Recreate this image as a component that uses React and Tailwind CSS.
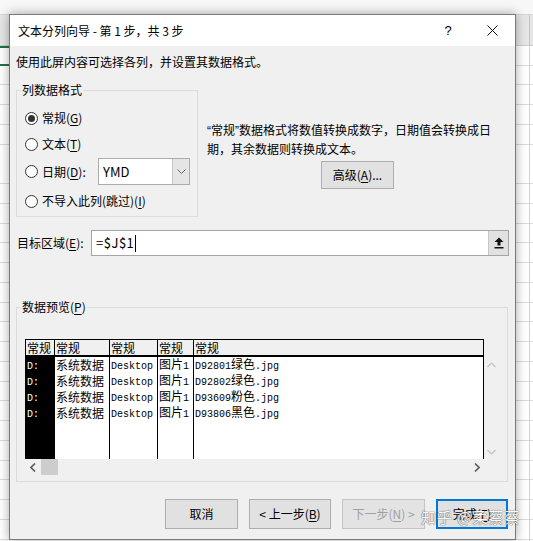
import React from "react";

function U({ children }) {
  return <span className="underline underline-offset-[2px] decoration-[1px]">{children}</span>;
}

function Radio({ checked }) {
  return (
    <span className="w-[13px] h-[13px] rounded-full border border-[#333333] bg-white flex items-center justify-center shrink-0">
      {checked && <span className="w-[7px] h-[7px] rounded-full bg-[#333333]" />}
    </span>
  );
}

function Mixed({ text }) {
  const parts = text.split(/([\u4e00-\u9fff]+)/).filter(Boolean);
  return (
    <span className="leading-[16px] whitespace-nowrap">
      {parts.map((p, i) =>
        /[\u4e00-\u9fff]/.test(p) ? (
          <span key={i} className="text-[12px] font-['Noto_Sans_CJK_SC',sans-serif]">
            {p}
          </span>
        ) : (
          <span key={i} className="text-[10px] font-['Liberation_Mono',monospace]">
            {p}
          </span>
        )
      )}
    </span>
  );
}

const cols = [
  { w: "w-[29px] border-r border-black", black: true, cells: ["D:", "D:", "D:", "D:"] },
  { w: "w-[55px] border-r border-black", cells: ["系统数据", "系统数据", "系统数据", "系统数据"] },
  { w: "w-[48px] border-r border-black", cells: ["Desktop", "Desktop", "Desktop", "Desktop"] },
  { w: "w-[36px] border-r border-black", cells: ["图片1", "图片1", "图片1", "图片1"] },
  { w: "flex-1", cells: ["D92801绿色.jpg", "D92802绿色.jpg", "D93609粉色.jpg", "D93806黑色.jpg"] },
];

function Btn({ children, className = "" }) {
  return (
    <div className={"h-[30px] flex items-center justify-center border " + className}>
      <span className="leading-[16px]">{children}</span>
    </div>
  );
}

function Q({ children }) {
  return <span className="font-['Liberation_Sans',sans-serif]">{children}</span>;
}

export default function App() {
  return (
    <div className="relative w-[533px] h-[541px] overflow-hidden bg-white font-['Noto_Sans_CJK_SC',sans-serif] text-[12px] text-black">
      {/* spreadsheet behind the dialog */}
      <div className="flex flex-col h-full">
        <div className="h-[15px] bg-[#f7f7f7] border-b border-[#d6d6d6]" />
        <div className="h-[31px] bg-[#e6e6e6] border-b border-[#cdcdcd] flex justify-end">
          <div className="w-[4px] border-l border-[#c4c4c4]" />
        </div>
        <div className="flex-1 bg-[linear-gradient(to_right,transparent_529px,#d4d4d4_529px,#d4d4d4_530px,transparent_530px),repeating-linear-gradient(to_bottom,transparent_0px,transparent_18.75px,#dadada_18.75px,#dadada_19.75px)]">
          <div className="w-[9px] h-[20px] border-y-2 border-[#217346]" />
        </div>
      </div>

      {/* dialog window */}
      <div className="absolute left-[9px] top-[14px] w-[507px] h-[526px] border border-[#7a7a7a] bg-[#f0f0f0] shadow-[0_0_10px_rgba(0,0,0,0.35)] flex flex-col">
        {/* title bar */}
        <div className="h-[31px] bg-white flex items-center pl-[8px] pr-[8px] shrink-0">
          <span className="leading-[16px]">文本分列向导 - 第 1 步，共 3 步</span>
          <div className="ml-auto flex items-center gap-[14px]">
            <span className="w-[30px] text-center text-[13px] leading-[16px] font-['Liberation_Sans',sans-serif]">?</span>
            <span className="w-[30px] flex justify-center">
              <svg width="11" height="11" viewBox="0 0 11 11">
                <path d="M0.5 0.5 L10.5 10.5 M10.5 0.5 L0.5 10.5" stroke="#111" strokeWidth="1" fill="none" />
              </svg>
            </span>
          </div>
        </div>

        {/* body */}
        <div className="flex-1 px-[6px] flex flex-col">
          <p className="mt-[8px] leading-[16px]">使用此屏内容可选择各列，并设置其数据格式。</p>

          <div className="mt-[12px] flex items-start">
            <fieldset className="w-[182px] border border-[#dcdcdc] pb-[5px]">
              <legend className="ml-[4px] px-[1px] leading-[16px]">列数据格式</legend>
              <div className="pl-[8px]">
                <div className="mt-[10px] h-[20px] flex items-center gap-[4px]">
                  <Radio checked />
                  <span className="leading-[16px]">
                    常规(<U>G</U>)
                  </span>
                </div>
                <div className="mt-[6px] h-[20px] flex items-center gap-[4px]">
                  <Radio />
                  <span className="leading-[16px]">
                    文本(<U>T</U>)
                  </span>
                </div>
                <div className="mt-[4px] h-[27px] flex items-center">
                  <Radio />
                  <span className="ml-[4px] w-[56px] leading-[16px]">
                    日期(<U>D</U>):
                  </span>
                  <div className="w-[92px] h-[27px] border border-[#acacac] bg-white flex">
                    <div className="flex-1 flex items-center pl-[4px] text-[13px] leading-[16px]">YMD</div>
                    <div className="w-[17px] bg-[#e5e5e5] border-l border-[#c8c8c8] flex items-center justify-center">
                      <svg width="9" height="6" viewBox="0 0 9 6">
                        <path d="M0.5 0.5 L4.5 4.5 L8.5 0.5" stroke="#666" strokeWidth="1" fill="none" />
                      </svg>
                    </div>
                  </div>
                </div>
                <div className="mt-[6px] h-[20px] flex items-center gap-[4px]">
                  <Radio />
                  <span className="leading-[16px]">
                    不导入此列(跳过)(<U>I</U>)
                  </span>
                </div>
              </div>
            </fieldset>

            <div className="ml-[9px] pt-[39px]">
              <p className="leading-[18px] whitespace-nowrap">
                <Q>“</Q>常规<Q>”</Q>数据格式将数值转换成数字，日期值会转换成日
                <br />
                期，其余数据则转换成文本。
              </p>
              <Btn className="ml-[114px] mt-[3px] w-[73px] !h-[28px] bg-[#e1e1e1] border-[#adadad]">
                高级(<U>A</U>)...
              </Btn>
            </div>
          </div>

          {/* target range */}
          <div className="mt-[13px] h-[26px] flex items-center">
            <span className="ml-[1px] w-[74px] leading-[16px]">
              目标区域(<U>E</U>):
            </span>
            <div className="w-[418px] h-[26px] border border-[#a5a5a5] bg-white flex">
              <div className="flex-1 flex items-center pl-[4px] text-[13px] leading-[16px]">
                <span className="tracking-[0.5px]">=$J$1</span>
                <span className="ml-[1px] w-px h-[17px] bg-black" />
              </div>
              <div className="w-[20px] bg-[#e1e1e1] border-l border-[#c6c6c6] flex items-center justify-center">
                <svg width="10" height="12" viewBox="0 0 10 12">
                  <path d="M5 0.5 L9.5 5 L6.5 5 L6.5 8.5 L3.5 8.5 L3.5 5 L0.5 5 Z" fill="#111" />
                  <rect x="0.5" y="10" width="9" height="1.5" fill="#111" />
                </svg>
              </div>
            </div>
          </div>

          {/* data preview */}
          <fieldset className="mt-[43px] w-[492px] border border-[#dcdcdc] pb-[6px]">
            <legend className="ml-[4px] px-[1px] leading-[16px]">
              数据预览(<U>P</U>)
            </legend>
            <div className="mt-[24px] ml-[8px] w-[474px] flex flex-col">
              <div className="flex">
                <div className="w-[459px] h-[120px] border-l border-t border-r border-black flex overflow-hidden">
                  {cols.map((c, ci) => (
                    <div key={ci} className={"flex flex-col " + c.w}>
                      <div className="h-[17px] bg-[#f0f0f0] border-b-2 border-black pl-[1px] flex items-end">
                        <span className="leading-[15px]">常规</span>
                      </div>
                      <div className={"flex-1 pl-[1px] " + (c.black ? "bg-black text-white" : "bg-white")}>
                        {c.cells.map((t, ri) => (
                          <div key={ri} className="h-[16px] flex items-center">
                            <Mixed text={t} />
                          </div>
                        ))}
                      </div>
                    </div>
                  ))}
                </div>
                <div className="w-[15px] h-[120px] pt-[18px] flex flex-col justify-between">
                  <div className="h-[15px] flex items-center justify-center">
                    <svg width="9" height="6" viewBox="0 0 9 6">
                      <path d="M0.5 5 L4.5 1 L8.5 5" stroke="#c2c2c2" strokeWidth="1.2" fill="none" />
                    </svg>
                  </div>
                  <div className="h-[15px] flex items-center justify-center">
                    <svg width="9" height="6" viewBox="0 0 9 6">
                      <path d="M0.5 1 L4.5 5 L8.5 1" stroke="#c2c2c2" strokeWidth="1.2" fill="none" />
                    </svg>
                  </div>
                </div>
              </div>
              <div className="w-[459px] h-[16px] flex">
                <div className="w-[15px] flex items-center justify-center">
                  <svg width="6" height="9" viewBox="0 0 6 9">
                    <path d="M5 0.5 L1 4.5 L5 8.5" stroke="#5a5a5a" strokeWidth="1.6" fill="none" />
                  </svg>
                </div>
                <div className="ml-[1px] w-[17px] bg-[#cdcdcd]" />
                <div className="flex-1" />
                <div className="w-[15px] flex items-center justify-center">
                  <svg width="6" height="9" viewBox="0 0 6 9">
                    <path d="M1 0.5 L5 4.5 L1 8.5" stroke="#5a5a5a" strokeWidth="1.6" fill="none" />
                  </svg>
                </div>
              </div>
            </div>
          </fieldset>

          {/* buttons */}
          <div className="mt-[17px] flex justify-end gap-[11px] pr-[1px]">
            <Btn className="w-[73px] bg-[#e1e1e1] border-[#adadad]">取消</Btn>
            <Btn className="w-[82px] bg-[#e1e1e1] border-[#adadad]">
              &lt; 上一步(<U>B</U>)
            </Btn>
            <Btn className="w-[83px] bg-[#e3e3e3] border-[#c4c4c4] text-[#a0a0a0]">
              下一步(<U>N</U>) &gt;
            </Btn>
            <Btn className="w-[72px] bg-[#e1e1e1] border-2 border-[#0078d7]">
              完成(<U>F</U>)
            </Btn>
          </div>
        </div>
      </div>

      {/* watermark */}
      <div className="absolute left-[421px] top-[508px] text-[15px] leading-[18px] tracking-[1px] text-[#fafafa] [text-shadow:0_0_1px_#555,0_0_1px_#555] whitespace-nowrap">
        知乎 @柔蔡蔡
      </div>
    </div>
  );
}
